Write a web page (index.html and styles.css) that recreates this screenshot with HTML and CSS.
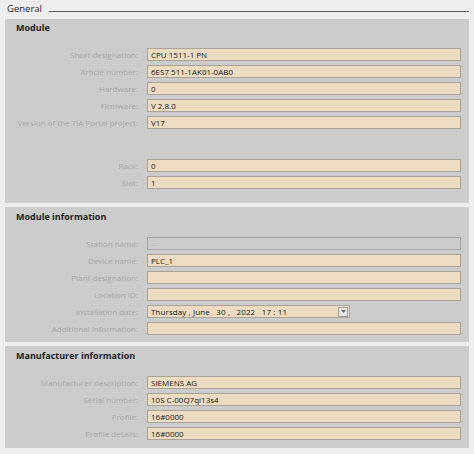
FILE: index.html
```html
<!DOCTYPE html>
<html lang="en">
<head>
    <meta charset="UTF-8">
    <meta name="viewport" content="width=device-width, initial-scale=1.0">
    <title>General</title>
    <link rel="stylesheet" href="styles.css">
</head>
<body>
    <div class="group-title">
        <span>General</span>
        <div class="group-line"></div>
    </div>

    <section class="panel panel-module">
        <h2>Module</h2>
        <div class="rows">
            <label>Short designation:</label><div class="field">CPU 1511-1 PN</div>
            <label>Article number:</label><div class="field">6ES7 511-1AK01-0AB0</div>
            <label>Hardware:</label><div class="field">0</div>
            <label>Firmware:</label><div class="field">V 2.8.0</div>
            <label>Version of the TIA Portal project:</label><div class="field">V17</div>
        </div>
        <div class="rows rows-slot">
            <label>Rack:</label><div class="field">0</div>
            <label>Slot:</label><div class="field">1</div>
        </div>
    </section>

    <section class="panel panel-info">
        <h2>Module information</h2>
        <div class="rows">
            <label>Station name:</label><div class="field field-off">---</div>
            <label>Device name:</label><div class="field">PLC_1</div>
            <label>Plant designation:</label><div class="field"></div>
            <label>Location ID:</label><div class="field"></div>
            <label>Installation date:</label>
            <div class="field field-date">
                <span class="date-text">Thursday , June   30 ,   2022   17 : 11</span>
                <span class="drop-btn">
                    <svg width="5" height="3" viewBox="0 0 5 3"><path d="M0 0h5L2.5 3z" fill="#6b6b6b"/></svg>
                </span>
            </div>
            <label>Additional information:</label><div class="field"></div>
        </div>
    </section>

    <section class="panel panel-maker">
        <h2>Manufacturer information</h2>
        <div class="rows">
            <label>Manufacturer description:</label><div class="field">SIEMENS AG</div>
            <label>Serial number:</label><div class="field">10S C-00Q7qi13s4</div>
            <label>Profile:</label><div class="field">16#0000</div>
            <label>Profile details:</label><div class="field">16#0000</div>
        </div>
    </section>
</body>
</html>
```

FILE: styles.css
```css
body {
    margin: 0;
    padding: 0 5px 0 5px;
    background: #eeeeee;
    font-family: 'Open Sans', 'Noto Sans', sans-serif;
    font-size: 8px;
    color: #1c1c1c;
    width: 464px;
}

.group-title {
    display: flex;
    align-items: center;
    height: 19px;
    font-size: 9.5px;
    color: #222222;
}

.group-title span {
    padding-left: 2px;
    margin-top: -3px;
}

.group-line {
    flex: 1;
    height: 1px;
    margin-left: 7px;
    margin-top: 4px;
    background: #5a5a5a;
}

.panel {
    background: #cccccc;
    margin-bottom: 4px;
    padding: 0 8px 8px 0;
}

.panel h2 {
    margin: 0 0 11px 11px;
    font-size: 9px;
    font-weight: bold;
    line-height: 18px;
    color: #1c1c1c;
}

.panel-module {
    padding-bottom: 14px;
}

.panel-info h2,
.panel-maker h2 {
    line-height: 20px;
    margin-bottom: 10px;
}

.panel-info {
    padding-bottom: 7px;
}

.rows {
    display: grid;
    grid-template-columns: 133px 1fr;
    column-gap: 9px;
    row-gap: 4px;
    grid-auto-rows: 13px;
}

.rows-slot {
    margin-top: 30px;
}

.rows label {
    text-align: right;
    color: #a6a6a6;
    line-height: 13px;
    white-space: nowrap;
}

.field {
    box-sizing: border-box;
    height: 13px;
    line-height: 11px;
    padding-left: 3px;
    background: #eddcc1;
    border: 1px solid #a9a396;
    color: #141414;
    white-space: nowrap;
}

.field-off {
    background: #cccccc;
    border-color: #a2a2a2;
    color: #a8a8a8;
}

.field-date {
    width: 203px;
    display: flex;
    align-items: center;
    justify-content: space-between;
    padding-right: 1px;
}

.date-text {
    white-space: pre;
    letter-spacing: 0.1px;
}

.drop-btn {
    box-sizing: border-box;
    width: 10px;
    height: 10px;
    display: flex;
    align-items: center;
    justify-content: center;
    background: #e6e6e6;
    border: 1px solid #9c9c9c;
}
```
